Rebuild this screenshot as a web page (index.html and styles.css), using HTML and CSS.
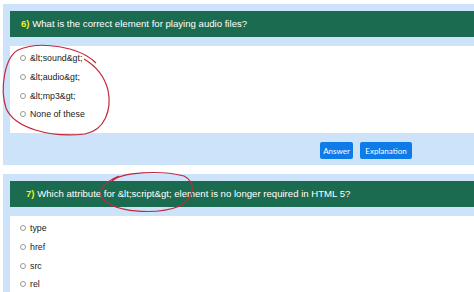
FILE: index.html
```html
<!DOCTYPE html>
<html lang="en">
<head>
    <meta charset="UTF-8">
    <meta name="viewport" content="width=device-width, initial-scale=1.0">
    <title>HTML Quiz</title>
    <link rel="stylesheet" href="styles.css">
</head>
<body>
    <div class="quiz-list">
        <div class="quiz-card">
            <div class="question"><span class="num">6)</span> What is the correct element for playing audio files?</div>
            <div class="options">
                <label class="option"><input type="radio" name="q6"> &amp;lt;sound&amp;gt;</label>
                <label class="option"><input type="radio" name="q6"> &amp;lt;audio&amp;gt;</label>
                <label class="option"><input type="radio" name="q6"> &amp;lt;mp3&amp;gt;</label>
                <label class="option"><input type="radio" name="q6"> None of these</label>
            </div>
            <div class="card-footer">
                <button class="btn">Answer</button>
                <button class="btn">Explanation</button>
            </div>
        </div>

        <div class="quiz-card">
            <div class="question second"><span class="num">7)</span> Which attribute for &amp;lt;script&amp;gt; element is no longer required in HTML 5?</div>
            <div class="options">
                <label class="option"><input type="radio" name="q7"> type</label>
                <label class="option"><input type="radio" name="q7"> href</label>
                <label class="option"><input type="radio" name="q7"> src</label>
                <label class="option"><input type="radio" name="q7"> rel</label>
            </div>
        </div>
    </div>

    <!-- hand drawn marks over the screenshot -->
    <svg class="marks" width="474" height="292" viewBox="0 0 474 292">
        <path d="M96 63 C80 47, 40 40, 18 50 C4 58, 0 90, 6 108 C14 128, 50 138, 85 134 C105 130, 112 110, 108 90 C104 75, 96 66, 84 59" />
        <path d="M112 181 C122 172, 160 170, 184 176 C196 182, 195 198, 180 206 C160 214, 122 214, 105 201 C96 193, 102 183, 119 176" />
    </svg>
</body>
</html>
```

FILE: styles.css
```css
* {
    margin: 0;
    padding: 0;
    box-sizing: border-box;
}

body {
    background: #fff;
    font-family: 'Liberation Sans', Arial, sans-serif;
    width: 474px;
    height: 292px;
    overflow: hidden;
    position: relative;
}

.quiz-list {
    padding: 4px 0 0 3px;
    width: 500px;
}

.quiz-card {
    background: #cde3f9;
    padding: 7px 0 0 7px;
    margin-bottom: 9px;
}

.question {
    background: #1b6b50;
    color: #fff;
    font-size: 9.6px;
    height: 26px;
    line-height: 26px;
    padding-left: 11px;
    margin-bottom: 9px;
}

.question.second {
    padding-left: 16px;
}

.question .num {
    color: #f0f014;
    font-weight: bold;
}

.options {
    background: #fff;
    padding: 3px 0 0 9px;
    height: 87px;
    display: flex;
    flex-direction: column;
}

.option {
    display: flex;
    align-items: center;
    height: 18.7px;
    font-size: 8.8px;
    color: #222;
}

.option input {
    appearance: none;
    width: 6px;
    height: 6px;
    border: 1px solid #999;
    border-radius: 50%;
    margin: 0 4px 0 1px;
    background: #fff;
}

.card-footer {
    height: 32px;
    display: flex;
    justify-content: flex-end;
    align-items: flex-start;
    gap: 7px;
    padding: 9px 88px 0 0;
}

.btn {
    background: #0e7be8;
    color: #fff;
    border: none;
    border-radius: 2px;
    font-family: Lato, sans-serif;
    font-size: 8px;
    height: 17px;
    padding: 0;
}

.btn:first-child {
    width: 33px;
}

.btn:last-child {
    width: 52px;
}

.marks {
    position: absolute;
    left: 0;
    top: 0;
    pointer-events: none;
}

.marks path {
    fill: none;
    stroke: #c3283a;
    stroke-width: 1.2;
}
```
